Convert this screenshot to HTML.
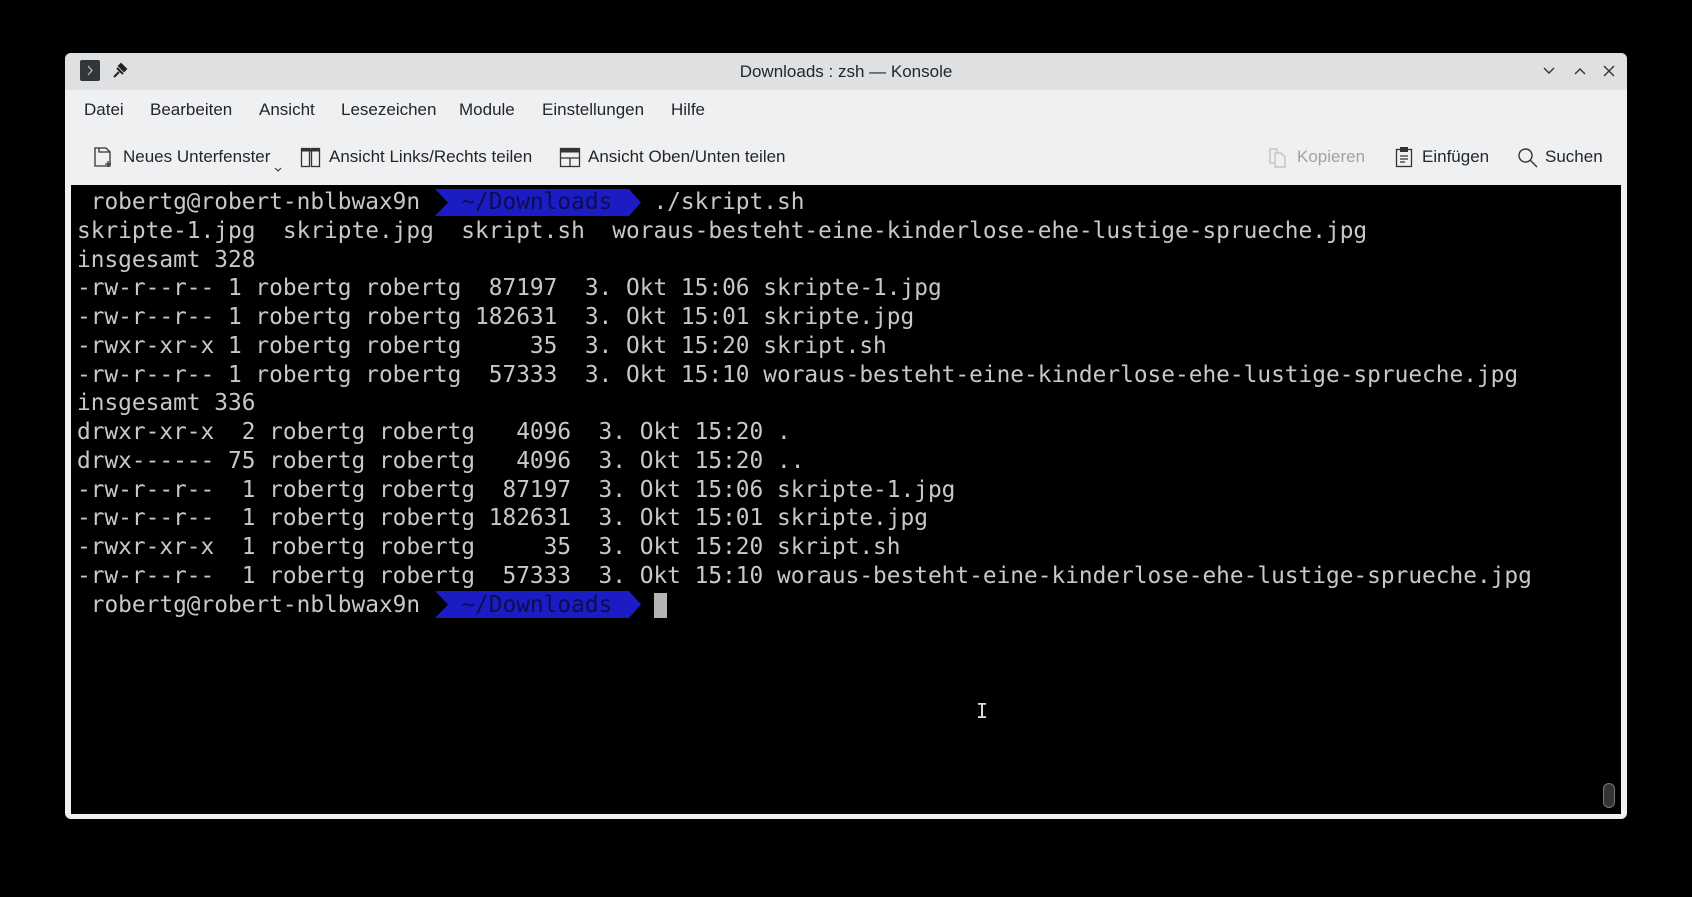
<!DOCTYPE html>
<html><head><meta charset="utf-8">
<style>
*{margin:0;padding:0;box-sizing:border-box}
body{width:1692px;height:897px;background:#000;position:relative;overflow:hidden;font-family:"Liberation Sans",sans-serif}
.win{position:absolute;left:65px;top:53px;width:1562px;height:766px;background:#eff0f1;border-radius:6px;overflow:hidden}
.title{position:absolute;left:0;top:0;width:100%;height:37px;background:#dee0e2}
.t{position:absolute;color:#232629;font-size:17px;white-space:nowrap}
.term{position:absolute;left:6px;top:132px;width:1550px;height:629px;background:#000}
pre{position:absolute;left:6px;top:3px;font-family:"DejaVu Sans Mono",monospace;font-size:22.8px;line-height:28.75px;color:#c8c8c8}
.ic{position:absolute}
</style></head><body>
<div class="win">
 <div class="title">
  <div style="position:absolute;left:15px;top:7px;width:20px;height:21px;background:#31363b;border-radius:2px"></div>
  <svg class="ic" style="left:15px;top:7px" width="20" height="21"><path d="M8 6 L12 10.5 L8 15" stroke="#bbb" stroke-width="1.3" fill="none"/></svg>
  <svg class="ic" style="left:46px;top:8px" width="18" height="18"><path d="M3 16 L8 11 M6 7 L12 13 M8 5 L13 10 L15 8 L10 3 Z" stroke="#222" stroke-width="2" fill="#222"/></svg>
  <div class="t" style="left:0;width:1562px;text-align:center;top:9px">Downloads : zsh — Konsole</div>
  <svg class="ic" style="left:1470px;top:8px" width="90" height="22"><path d="M9 7 L14 12 L19 7" stroke="#333" stroke-width="1.4" fill="none"/><path d="M40 13 L45 8 L50 13" stroke="#333" stroke-width="1.4" fill="none"/><path d="M69 5 L79 15 M79 5 L69 15" stroke="#333" stroke-width="1.4" fill="none"/></svg>
 </div>
 <div class="t" style="left:19px;top:47px">Datei</div>
 <div class="t" style="left:85px;top:47px">Bearbeiten</div>
 <div class="t" style="left:194px;top:47px">Ansicht</div>
 <div class="t" style="left:276px;top:47px">Lesezeichen</div>
 <div class="t" style="left:394px;top:47px">Module</div>
 <div class="t" style="left:477px;top:47px">Einstellungen</div>
 <div class="t" style="left:606px;top:47px">Hilfe</div>

 <svg class="ic" style="left:28px;top:93px" width="22" height="24"><path d="M2 2 H13 L17 6 V20 H2 Z" fill="none" stroke="#333" stroke-width="1.3"/><path d="M6 2 V6 H17" fill="none" stroke="#333" stroke-width="1.3"/><path d="M15 15 V21 M12 18 H18" stroke="#333" stroke-width="1.3"/></svg>
 <div class="t" style="left:58px;top:94px">Neues Unterfenster</div>
 <svg class="ic" style="left:208px;top:113px" width="10" height="8"><path d="M2 2 L5 5 L8 2" stroke="#333" stroke-width="1.1" fill="none"/></svg>
 <svg class="ic" style="left:235px;top:94px" width="22" height="22"><rect x="1.5" y="1.5" width="8" height="18" fill="none" stroke="#333" stroke-width="1.3"/><rect x="11.5" y="1.5" width="8" height="18" fill="none" stroke="#333" stroke-width="1.3"/><rect x="1.5" y="1.5" width="18" height="3" fill="#333"/></svg>
 <div class="t" style="left:264px;top:94px">Ansicht Links/Rechts teilen</div>
 <svg class="ic" style="left:494px;top:94px" width="22" height="22"><rect x="1.5" y="1.5" width="19" height="18" fill="none" stroke="#333" stroke-width="1.3"/><rect x="1.5" y="1.5" width="19" height="4" fill="#333"/><path d="M1.5 11 H20.5 M11 11 V19.5" stroke="#333" stroke-width="1.3"/></svg>
 <div class="t" style="left:523px;top:94px">Ansicht Oben/Unten teilen</div>
 <svg class="ic" style="left:1203px;top:94px" width="22" height="22"><path d="M2 2 H9 V16 H2 Z" fill="none" stroke="#bbb" stroke-width="1.2"/><path d="M7 6 H13 L17 10 V20 H7 Z" fill="#eff0f1" stroke="#bbb" stroke-width="1.2"/></svg>
 <div class="t" style="left:1232px;top:94px;color:#a0a2a4">Kopieren</div>
 <svg class="ic" style="left:1329px;top:92px" width="22" height="24"><rect x="2.5" y="4.5" width="15" height="17" fill="none" stroke="#333" stroke-width="1.3"/><rect x="6" y="2" width="8" height="5" fill="#333"/><path d="M6 11 H14 M6 14 H14 M6 17 H11" stroke="#333" stroke-width="1.2"/></svg>
 <div class="t" style="left:1357px;top:94px">Einfügen</div>
 <svg class="ic" style="left:1452px;top:94px" width="22" height="22"><circle cx="8.5" cy="8.5" r="6.5" fill="none" stroke="#333" stroke-width="1.4"/><path d="M13 13 L20 20" stroke="#333" stroke-width="1.4"/></svg>
 <div class="t" style="left:1480px;top:94px">Suchen</div>

 <div class="term">
  <svg class="ic" style="left:364px;top:3px" width="210" height="29"><path d="M0 1 H194 L206 14.5 L194 28 H0 L13 14.5 Z" fill="#1c1cc4"/></svg>
  <svg class="ic" style="left:364px;top:405px" width="210" height="29"><path d="M0 1 H194 L206 14.5 L194 28 H0 L13 14.5 Z" fill="#1c1cc4"/></svg>
  <div style="position:absolute;left:583px;top:408px;width:13px;height:25px;background:#b4b4b4"></div>
<pre> robertg@robert-nblbwax9n   <span style="color:#0d0d50">~/Downloads</span>   ./skript.sh
skripte-1.jpg  skripte.jpg  skript.sh  woraus-besteht-eine-kinderlose-ehe-lustige-sprueche.jpg
insgesamt 328
-rw-r--r-- 1 robertg robertg  87197  3. Okt 15:06 skripte-1.jpg
-rw-r--r-- 1 robertg robertg 182631  3. Okt 15:01 skripte.jpg
-rwxr-xr-x 1 robertg robertg     35  3. Okt 15:20 skript.sh
-rw-r--r-- 1 robertg robertg  57333  3. Okt 15:10 woraus-besteht-eine-kinderlose-ehe-lustige-sprueche.jpg
insgesamt 336
drwxr-xr-x  2 robertg robertg   4096  3. Okt 15:20 .
drwx------ 75 robertg robertg   4096  3. Okt 15:20 ..
-rw-r--r--  1 robertg robertg  87197  3. Okt 15:06 skripte-1.jpg
-rw-r--r--  1 robertg robertg 182631  3. Okt 15:01 skripte.jpg
-rwxr-xr-x  1 robertg robertg     35  3. Okt 15:20 skript.sh
-rw-r--r--  1 robertg robertg  57333  3. Okt 15:10 woraus-besteht-eine-kinderlose-ehe-lustige-sprueche.jpg
 robertg@robert-nblbwax9n   <span style="color:#0d0d50">~/Downloads</span>  </pre>
  <div style="position:absolute;left:905px;top:514px;color:#ddd;font-size:20px;font-family:'DejaVu Sans Mono',monospace">I</div>
  <div style="position:absolute;left:1532px;top:598px;width:12px;height:25px;border-radius:6px;background:#333;border:1px solid #777"></div>
 </div>
</div>
</body></html>
